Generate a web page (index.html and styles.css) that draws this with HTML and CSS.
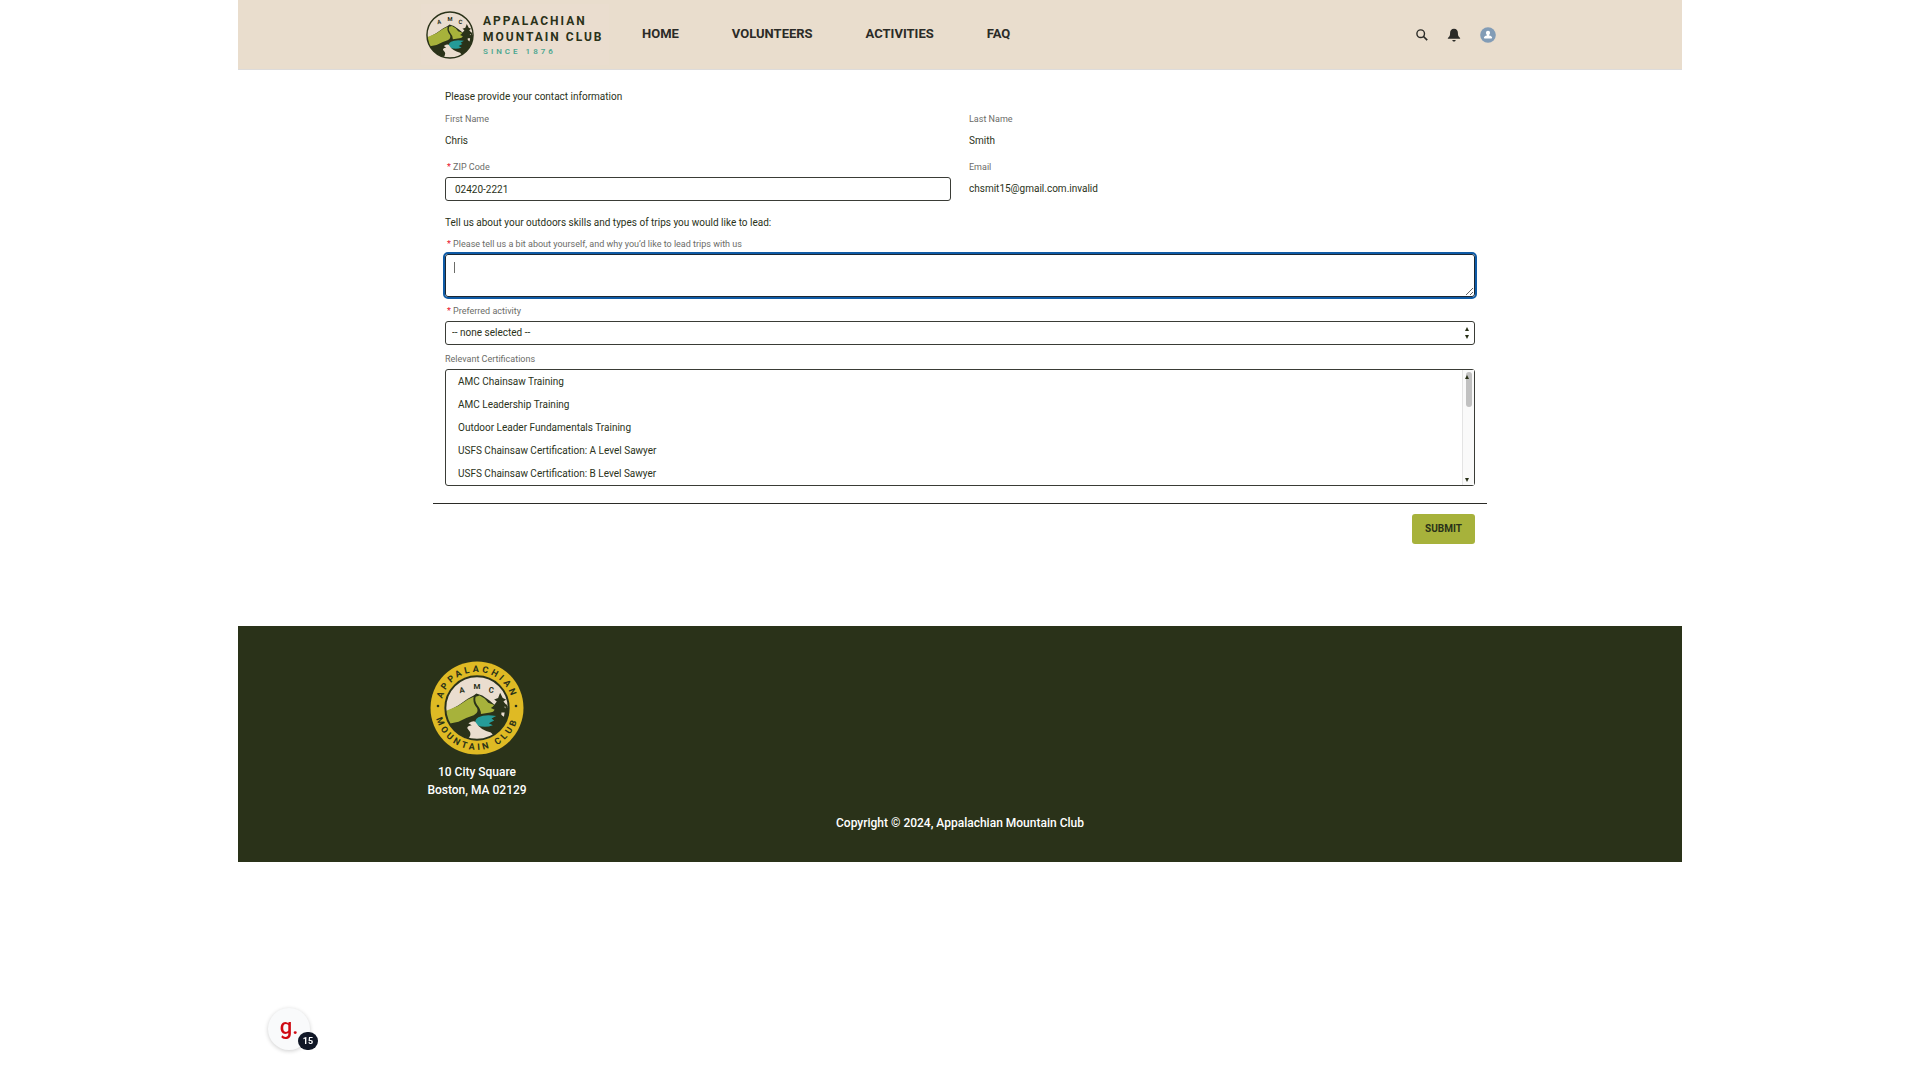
FILE: index.html
```html
<!DOCTYPE html>
<html lang="en">
<head>
<meta charset="utf-8">
<meta name="viewport" content="width=device-width, initial-scale=1">
<title>Volunteer Leader Application</title>
<link rel="stylesheet" href="styles.css">
</head>
<body>
<svg class="defs" aria-hidden="true">
  <defs>
    <clipPath id="disc"><circle cx="50" cy="50" r="48"/></clipPath>
    <symbol id="scene" viewBox="0 0 100 100">
      <circle cx="50" cy="50" r="49" fill="#eaddcf"/>
      <g clip-path="url(#disc)">
        <path d="M0 58 L22 46 L36 36 L45 31 L49 28 L58 31 L68 38 L80 48 L86 60 L100 70 V100 H0Z" fill="#2a3219"/>
        <path d="M1 55 L21 47 L36 37 L45 33 Q43 42 50 50 Q53 57 45 61 Q32 65 22 71 Q10 73 2 76Z" fill="#a7b23b"/>
        <path d="M48 33 L54 31 L62 36 L67 42 L77 46 L71 50 L80 54 L70 57 L56 59 Q56 52 50 45 Q46 39 48 33Z" fill="#a7b23b"/>
        <path d="M52 64 Q62 59 79 62 L72 66 L76 69 L68 73 L74 76 Q62 81 50 76 Q44 69 52 64Z" fill="#259b98"/>
        <path d="M93 60 L98 60 V66 L92 64Z" fill="#259b98"/>
        <path d="M37 73 Q47 67 49 73 Q55 83 71 87 Q78 92 72 100 H32 Q45 91 37 83 Q32 78 42 76Z" fill="#eaddcf"/>
        <path d="M85 27 L89 35 L94 37 L90 40 L97 48 L91 48 L99 57 L87 57 L86 84 H83 L83 58 L72 60 L79 49 L74 48 L80 40 L76 37 L82 35Z" fill="#2a3219"/>
        <path d="M94 44 L98 52 L100 70 L90 68Z" fill="#2a3219"/>
      </g>
      <circle cx="50" cy="50" r="48" fill="none" stroke="#2a3219" stroke-width="3"/>
      <g fill="#2a3219" font-family="Roboto, sans-serif" font-size="12" font-weight="700" text-anchor="middle">
        <text x="28" y="27" transform="rotate(-10 28 27)">A</text>
        <text x="50" y="21">M</text>
        <text x="71" y="27" transform="rotate(10 71 27)">C</text>
      </g>
    </symbol>
  </defs>
</svg>

<div class="page">
  <header class="header">
    <div class="header-inner">
      <a class="brand" href="#" aria-label="Appalachian Mountain Club home">
        <svg class="brand-mark" aria-hidden="true"><use href="#scene"/></svg>
        <span class="brand-text">
          <span class="brand-name">APPALACHIAN</span>
          <span class="brand-name">MOUNTAIN CLUB</span>
          <span class="brand-since">SINCE 1876</span>
        </span>
      </a>
      <nav class="nav">
        <a href="#">HOME</a>
        <a href="#">VOLUNTEERS</a>
        <a href="#">ACTIVITIES</a>
        <a href="#">FAQ</a>
      </nav>
      <div class="tools">
        <button class="tool" type="button" aria-label="Search">
          <svg width="12" height="12" viewBox="0 0 12 12" fill="none" stroke="#2b2b27"><circle cx="4.7" cy="4.7" r="3.8" stroke-width="1.4"/><path d="M7.5 7.5 L11.2 11.2" stroke-width="1.7"/></svg>
        </button>
        <button class="tool" type="button" aria-label="Notifications">
          <svg width="14" height="14" viewBox="0 0 14 14" fill="#2b2b27"><path d="M7 .8C4.4.8 3.1 2.5 3.1 4.8c0 2.600-.4 3.600-2 4.900-.6.500-.3 1.100.3 1.100h11.200c.6 0 .9-.6.3-1.100-1.600-1.300-2-2.300-2-4.900C10.900 2.500 9.600.8 7 .8Z"/><path d="M5.300 11.900h3.400c-.2 1-.8 1.600-1.700 1.600s-1.500-.6-1.700-1.600Z"/></svg>
        </button>
        <button class="tool" type="button" aria-label="Profile">
          <svg width="16" height="16" viewBox="0 0 16 16"><circle cx="8" cy="8" r="7.800" fill="#829cb6"/><circle cx="8" cy="5.900" r="2.100" fill="#fff"/><path d="M6.900 7h2.200v1.600c2 .4 3 1.200 3 2.200 0 .5-.3.800-.8.800H4.700c-.5 0-.8-.3-.8-.8 0-1 1-1.800 3-2.200Z" fill="#fff"/></svg>
        </button>
      </div>
    </div>
  </header>

  <main class="main">
    <form class="form" onsubmit="return false">
      <div class="fields">
        <h2 class="section-title">Please provide your contact information</h2>
        <div class="contact">
          <div class="field readonly">
            <span class="label">First Name</span>
            <span class="value">Chris</span>
          </div>
          <div class="field readonly">
            <span class="label">Last Name</span>
            <span class="value">Smith</span>
          </div>
          <div class="field">
            <label class="label required" for="zip">ZIP Code</label>
            <input class="control" id="zip" type="text" value="02420-2221">
          </div>
          <div class="field readonly">
            <span class="label">Email</span>
            <span class="value">chsmit15@gmail.com.invalid</span>
          </div>
        </div>

        <h2 class="section-title">Tell us about your outdoors skills and types of trips you would like to lead:</h2>
        <div class="field">
          <label class="label required" for="about">Please tell us a bit about yourself, and why you’d like to lead trips with us</label>
          <div class="overlay-box caret">
            <textarea class="control about" id="about"></textarea>
          </div>
        </div>
        <div class="field">
          <label class="label required" for="activity">Preferred activity</label>
          <div class="overlay-box">
            <select class="control activity" id="activity">
              <option>-- none selected --</option>
            </select>
            <svg class="stepper" width="6" height="14" viewBox="0 0 6 14" fill="#2a3219" aria-hidden="true"><path d="M3 1 L5 5 H1Z M3 13 L5 9 H1Z"/></svg>
          </div>
        </div>
        <div class="field">
          <label class="label" for="certs">Relevant Certifications</label>
          <div class="overlay-box">
            <select class="control certs" id="certs" multiple size="5">
              <option>AMC Chainsaw Training</option>
              <option>AMC Leadership Training</option>
              <option>Outdoor Leader Fundamentals Training</option>
              <option>USFS Chainsaw Certification: A Level Sawyer</option>
              <option>USFS Chainsaw Certification: B Level Sawyer</option>
            </select>
            <div class="scrollbar" aria-hidden="true">
              <span class="thumb"></span>
              <svg class="arrow arrow-up" width="6" height="4" viewBox="0 0 6 4" fill="#2a3219"><path d="M3 0 L5 4 H1Z"/></svg>
              <svg class="arrow arrow-down" width="6" height="4" viewBox="0 0 6 4" fill="#2a3219"><path d="M3 4 L5 0 H1Z"/></svg>
            </div>
          </div>
        </div>
      </div>
      <div class="actions">
        <button class="submit" type="submit">SUBMIT</button>
      </div>
    </form>
  </main>

  <footer class="footer">
    <div class="footer-inner">
      <div class="contact-card">
        <svg class="seal" viewBox="0 0 94 94" role="img" aria-label="Appalachian Mountain Club seal">
          <defs>
            <path id="arc-top" d="M11 47 A36 36 0 0 1 83 47"/>
            <path id="arc-bottom" d="M5 47 A42 42 0 0 0 89 47"/>
          </defs>
          <circle cx="47" cy="47" r="46.500" fill="#dfba24"/>
          <use href="#scene" x="14" y="14" width="66" height="66"/>
          <g class="seal-text">
            <text><textPath href="#arc-top" startOffset="50%">APPALACHIAN</textPath></text>
            <text><textPath href="#arc-bottom" startOffset="50%">MOUNTAIN CLUB</textPath></text>
          </g>
          <circle cx="8" cy="45" r="1.300" fill="#2a3219"/>
          <circle cx="86" cy="45" r="1.300" fill="#2a3219"/>
        </svg>
        <address class="address">10 City Square<br>Boston, MA 02129</address>
      </div>
      <p class="copyright">Copyright © 2024, Appalachian Mountain Club</p>
    </div>
  </footer>
</div>

<button class="helper" type="button" aria-label="Grammarly">
  <span class="helper-g">g.</span>
  <span class="helper-count">15</span>
</button>
</body>
</html>
```
FILE: styles.css
```css
* {
  box-sizing: border-box;
}

body {
  margin: 0;
  background: #fff;
  color: #2a3219;
  font-family: Roboto, "Liberation Sans", sans-serif;
  font-size: 10px;
  line-height: 14px;
}

button,
input,
select,
textarea {
  font: inherit;
  color: inherit;
}

button {
  padding: 0;
  border: 0;
  background: none;
}

.defs {
  position: absolute;
  width: 0;
  height: 0;
}

.page {
  max-width: 1444px;
  margin: 0 auto;
}

/* Header */
.header {
  background: #e9ddcd;
  border-bottom: 1px solid #dddbda;
}

.header-inner {
  display: flex;
  align-items: center;
  max-width: 1078px;
  min-height: 69px;
  margin: 0 auto;
}

.brand {
  display: flex;
  align-items: center;
  gap: 9px;
  width: 188px;
  height: 61px;
  padding-left: 5px;
  background: #eaddcf;
  color: inherit;
  text-decoration: none;
}

.brand-mark {
  width: 48px;
  height: 48px;
}

.brand-text {
  display: flex;
  flex-direction: column;
  padding-top: 2px;
  white-space: nowrap;
}

.brand-name {
  font-size: 12px;
  font-weight: 700;
  line-height: 16px;
  letter-spacing: 2px;
}

.brand-since {
  color: #4aa78f;
  font-size: 8px;
  font-weight: 600;
  line-height: 14px;
  letter-spacing: 3px;
}

.nav {
  display: flex;
  gap: 53px;
  margin-left: 33px;
  padding-bottom: 2px;
}

.nav a {
  color: #2b2b27;
  font-size: 13px;
  font-weight: 700;
  line-height: 20px;
  text-decoration: none;
}

.tools {
  display: flex;
  align-items: center;
  gap: 19px;
  margin-left: auto;
  padding-right: 3px;
}

.tool {
  display: flex;
}

/* Form */
.main {
  max-width: 1054px;
  margin: 0 auto;
  padding: 20px 0 82px;
}

.fields {
  padding: 0 12px 17px;
  border-bottom: 1px solid #2b2b27;
}

.section-title {
  margin: 0;
  font-size: 10px;
  font-weight: 400;
  line-height: 14px;
}

.contact {
  display: grid;
  grid-template-columns: 1fr 1fr;
  gap: 9px 18px;
  margin: 8px 0 15px;
}

.field {
  display: flex;
  flex-direction: column;
  gap: 3px;
  padding-top: 7px;
}

.contact .field {
  padding-top: 0;
}

.contact .readonly {
  gap: 5px;
}

.label {
  color: #6b6c68;
  font-size: 9px;
  line-height: 14px;
}

.required::before {
  content: "* ";
  padding-left: 2px;
  color: #e8112d;
}

.value {
  line-height: 20px;
}

.control {
  display: block;
  width: 100%;
  height: 24px;
  margin: 0;
  padding: 0 9px;
  border: 1px solid #3a3c36;
  border-radius: 3px;
  background: #fff;
}

.overlay-box {
  position: relative;
}

.about {
  height: 43px;
  padding: 8px 9px;
  border-color: #1b2733;
  outline: 2px solid #0f5ba6;
  outline-offset: 0;
}

.caret::after {
  content: "";
  position: absolute;
  top: 8px;
  left: 9px;
  width: 1px;
  height: 11px;
  background: #6b6c68;
}

.activity {
  padding: 0 6px;
  appearance: none;
}

.stepper {
  position: absolute;
  top: 5px;
  right: 5px;
}

.certs {
  height: 117px;
  padding: 1px 0 0;
  overflow: hidden;
}

.certs option {
  min-height: 23px;
  padding: 5px 12px 4px;
  line-height: 14px;
}

.scrollbar {
  position: absolute;
  inset: 1px 1px 1px auto;
  width: 12px;
  border-left: 1px solid #e4e4e4;
  background: #fafafa;
}

.thumb {
  position: absolute;
  top: 2px;
  right: 2px;
  width: 6px;
  height: 35px;
  border-radius: 3px;
  background: #c1c1c1;
}

.arrow {
  position: absolute;
  left: 1px;
}

.arrow-up {
  top: 5px;
}

.arrow-down {
  bottom: 3px;
}

.actions {
  display: flex;
  justify-content: flex-end;
  padding: 10px 12px 0;
}

.submit {
  width: 63px;
  height: 30px;
  border-radius: 3px;
  background: #a7b23b;
  font-size: 10px;
  font-weight: 700;
}

/* Footer */
.footer {
  background: #2a3219;
  color: #fff;
  font-size: 12px;
  font-weight: 500;
  line-height: 18px;
}

.footer-inner {
  max-width: 1078px;
  margin: 0 auto;
  padding: 35px 5px 30px;
}

.contact-card {
  display: flex;
  flex-direction: column;
  align-items: center;
  gap: 8px;
  width: 102px;
}

.seal {
  width: 94px;
  height: 94px;
}

.seal-text {
  fill: #2a3219;
  font-size: 9px;
  font-weight: 700;
  letter-spacing: 3px;
  text-anchor: middle;
}

.address {
  font-style: normal;
  text-align: center;
  white-space: nowrap;
}

.copyright {
  margin: 15px 0 0;
  text-align: center;
}

/* Floating helper */
.helper {
  position: fixed;
  left: 268px;
  bottom: 30px;
  width: 42px;
  height: 42px;
  border-radius: 50%;
  background: #f9fafb;
  box-shadow: 0 1px 4px rgba(0, 0, 0, 0.2);
}

.helper-g {
  display: block;
  padding-bottom: 4px;
  color: #cf0a12;
  font-size: 22px;
  font-weight: 500;
  line-height: 28px;
}

.helper-count {
  position: absolute;
  right: -8px;
  bottom: 0;
  width: 20px;
  height: 18px;
  border-radius: 9px;
  background: #111827;
  color: #fff;
  font-size: 9px;
  font-weight: 700;
  line-height: 18px;
}
```
